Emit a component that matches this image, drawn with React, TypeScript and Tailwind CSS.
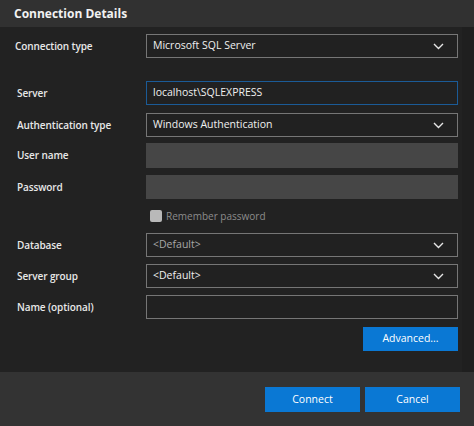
import React from "react";

const font = { fontFamily: '"Open Sans", "Noto Sans", sans-serif' };

function Chevron() {
  return (
    <svg width="11" height="7" viewBox="0 0 11 7" className="shrink-0">
      <path d="M1 1 L5.5 5.5 L10 1" fill="none" stroke="#e6e6e6" strokeWidth="1.4" />
    </svg>
  );
}

function Label({ children, className = "" }: { children: React.ReactNode; className?: string }) {
  return (
    <div className={`w-[129px] shrink-0 text-[10px] font-semibold tracking-[-0.1px] text-[#e8e8e8] ${className}`}>
      {children}
    </div>
  );
}

function Select({ value, muted = false }: { value: string; muted?: boolean }) {
  return (
    <div className="flex h-[24px] flex-1 items-center justify-between border border-[#767676] bg-[#212121] pl-[6px] pr-[13px]">
      <span className={`text-[10.5px] ${muted ? "text-[#a8a8a8]" : "text-[#f0f0f0] font-medium"}`}>{value}</span>
      <Chevron />
    </div>
  );
}

export default function App() {
  return (
    <div className="flex h-[426px] w-[474px] flex-col bg-[#222222]" style={font}>
      <div className="flex h-[27px] shrink-0 items-center bg-[#313131] px-[14px]">
        <span className="text-[12px] font-bold text-[#f2f2f2]">Connection Details</span>
      </div>

      <div className="flex flex-1">
        <div className="flex w-[462px] flex-col pl-[17px] pr-[4px]">
          <div className="mt-[7px] flex items-center">
            <Label className="-ml-[2px] w-[131px]">Connection type</Label>
            <Select value="Microsoft SQL Server" />
          </div>

          <div className="mt-[23px] flex items-center">
            <Label>Server</Label>
            <div className="flex h-[24px] flex-1 items-center border border-[#1b5b97] bg-[#212121] pl-[6px]">
              <span className="text-[10.5px] font-medium text-[#f0f0f0]">localhost\SQLEXPRESS</span>
            </div>
          </div>

          <div className="mt-[8px] flex items-center">
            <Label>Authentication type</Label>
            <Select value="Windows Authentication" />
          </div>

          <div className="mt-[6px] flex items-center">
            <Label>User name</Label>
            <div className="h-[25px] flex-1 bg-[#464646]" />
          </div>

          <div className="mt-[7px] flex items-center">
            <Label>Password</Label>
            <div className="h-[24px] flex-1 bg-[#464646]" />
          </div>

          <div className="mt-[10px] flex h-[14px] items-center pl-[133px]">
            <div className="h-[12px] w-[12px] rounded-[2px] bg-[#b9b9b9]" />
            <span className="ml-[4px] text-[10px] text-[#8c8c8c]">Remember password</span>
          </div>

          <div className="mt-[10px] flex items-center">
            <Label>Database</Label>
            <Select value="<Default>" muted />
          </div>

          <div className="mt-[7px] flex items-center">
            <Label>Server group</Label>
            <Select value="<Default>" />
          </div>

          <div className="mt-[7px] flex items-center">
            <Label>Name (optional)</Label>
            <div className="h-[24px] flex-1 border border-[#767676] bg-[#212121]" />
          </div>

          <div className="mt-[8px] flex justify-end">
            <button className="h-[24px] w-[95px] bg-[#0a78d4] text-[10.5px] font-medium text-white">Advanced...</button>
          </div>
        </div>
        <div className="flex-1 bg-[#1f1f1f]" />
      </div>

      <div className="flex h-[54px] shrink-0 items-start justify-end gap-[5px] bg-[#333333] pr-[14px] pt-[15px]">
        <button className="h-[25px] w-[95px] bg-[#0a78d4] text-[10.5px] font-medium text-white">Connect</button>
        <button className="h-[25px] w-[95px] bg-[#0a78d4] text-[10.5px] font-medium text-white">Cancel</button>
      </div>
    </div>
  );
}
